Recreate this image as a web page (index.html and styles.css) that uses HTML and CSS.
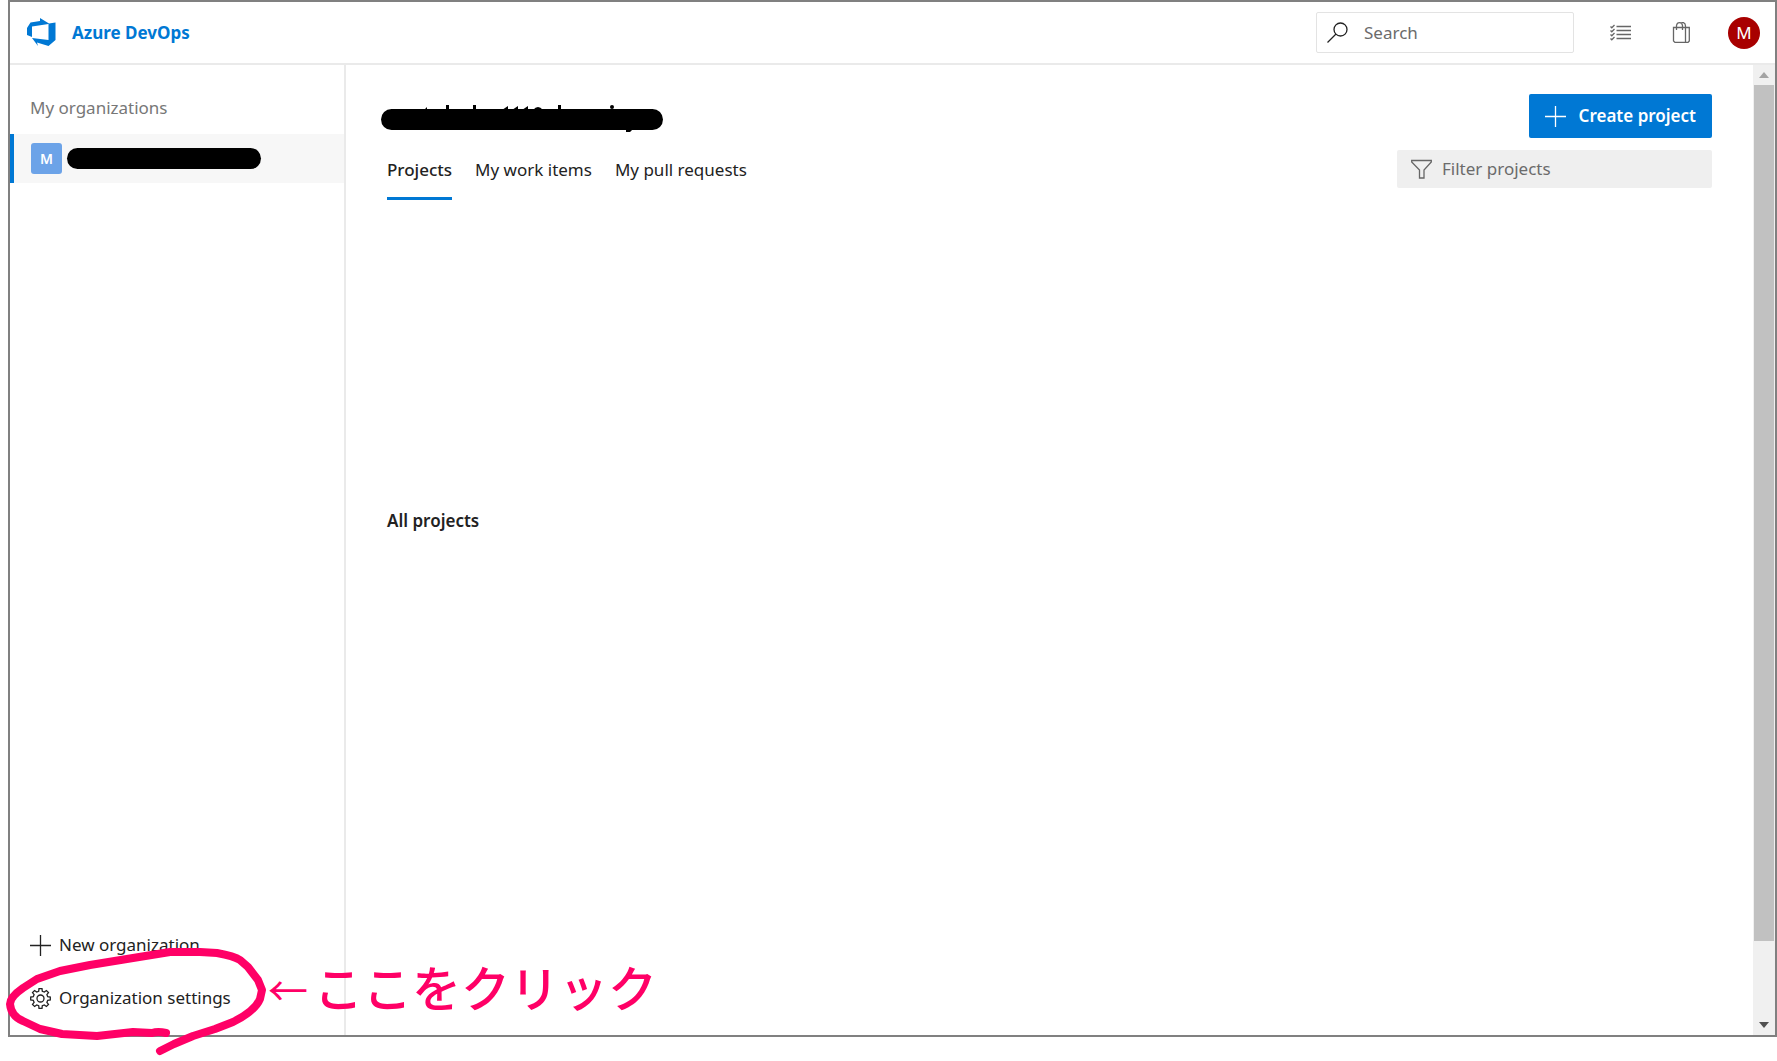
FILE: index.html
```html
<!DOCTYPE html>
<html lang="en">
<head>
    <meta charset="UTF-8">
    <meta name="viewport" content="width=device-width, initial-scale=1.0">
    <title>Azure DevOps</title>
    <link rel="stylesheet" href="styles.css">
</head>
<body>
    <div class="window">
        <header class="topbar">
            <a class="brand" href="#">
                <svg class="logo" viewBox="0 0 29 29" aria-hidden="true">
                    <path fill="#0078d4" d="M0 10 3.500 4.500 13 3V0L22 5.500 28.500 4.500V22L21.500 28 10 24.500 11 28 5 20 21.500 22V6L5 8.500V19L0 17Z"/>
                </svg>
                <span>Azure DevOps</span>
            </a>
            <label class="search">
                <svg class="icon" viewBox="0 0 21 21" aria-hidden="true">
                    <circle cx="13.500" cy="7.500" r="6.500"/>
                    <path d="M9 12 .5 20.500"/>
                </svg>
                <input type="search" placeholder="Search" aria-label="Search">
            </label>
            <div class="top-actions">
                <button class="icon-btn" aria-label="Work items">
                    <svg class="icon" viewBox="0 0 21 21">
                        <path d="M6.500 4.500H21M6.500 8.500H21M6.500 12.500H21M6.500 16.500H21"/>
                        <path d="M.5 4.500l1.300 1.300L4.500 3M.5 8.500l1.300 1.300L4.500 7M.5 12.500l1.300 1.300L4.500 11M.5 16.500l1.300 1.300L4.500 15"/>
                    </svg>
                </button>
                <button class="icon-btn" aria-label="Marketplace">
                    <svg class="icon" viewBox="0 0 21 21">
                        <path d="M4.500 5.500H20.300V19L19 20.400H6L4.500 19ZM16.500 5.500V20.400M7.500 8V3.500Q8 .7 10.500 .7T13.500 3.500V8M11.500 1Q13 .5 14.500 .7 16.500 1.500 16.500 4V8"/>
                    </svg>
                </button>
                <button class="user" aria-label="Account">M</button>
            </div>
        </header>

        <div class="content">
            <nav class="sidebar">
                <h2 class="sidebar-title">My organizations</h2>
                <a class="org" href="#" aria-label="Organization">
                    <span class="org-badge">M</span>
                    <span class="org-name"></span>
                </a>
                <div class="sidebar-footer">
                    <a class="side-link" href="#">
                        <svg class="icon" viewBox="0 0 21 21" aria-hidden="true"><path d="M0 10.500H21M10.500 0V21"/></svg>
                        <span>New organization</span>
                    </a>
                    <a class="side-link" href="#">
                        <svg class="icon" viewBox="0 0 21 21" aria-hidden="true">
                            <circle cx="10.500" cy="10.500" r="3.500"/>
                            <path d="M8.700 3.300 9 .7H12L12.300 3.300 14.300 4.100 16.400 2.500 18.500 4.600 16.900 6.700 17.700 8.700 20.300 9V12L17.700 12.300 16.900 14.300 18.500 16.400 16.400 18.500 14.300 16.900 12.300 17.700 12 20.300H9L8.700 17.700 6.700 16.900 4.600 18.500 2.500 16.400 4.100 14.300 3.300 12.300 .7 12V9L3.300 8.700 4.100 6.700 2.500 4.600 4.600 2.500 6.700 4.100Z"/>
                        </svg>
                        <span>Organization settings</span>
                    </a>
                </div>
            </nav>

            <main class="main">
                <div class="main-row">
                    <svg class="redacted" viewBox="0 0 282 30" aria-hidden="true">
                        <rect x="0" y="5" width="282" height="21" rx="10.500"/>
                        <path d="M43 6l3-3v3zM65 1h3v6h-3zM92 1h3v6h-3zM121 6l6-4v4zM131 6l6-4v4zM141 6l6-4v4zM152 6q5-6 10 0zM177 1h3v6h-3zM245 25h7l-3 3h-4z"/>
                        <circle cx="231" cy="3" r="2"/>
                    </svg>
                    <button class="create-btn">
                        <svg class="icon" viewBox="0 0 21 21" aria-hidden="true"><path d="M0 10.500H21M10.500 0V21"/></svg>
                        <span>Create project</span>
                    </button>
                </div>
                <div class="main-row">
                    <div class="tabs">
                        <a class="tab active" href="#">Projects</a>
                        <a class="tab" href="#">My work items</a>
                        <a class="tab" href="#">My pull requests</a>
                    </div>
                    <label class="filter">
                        <svg class="icon" viewBox="0 0 21 21" aria-hidden="true">
                            <path d="M.7 1.500H20.300V3L13 11V19H8.500V11L.7 3Z"/>
                        </svg>
                        <input type="text" placeholder="Filter projects" aria-label="Filter projects">
                    </label>
                </div>
                <h2 class="section-title">All projects</h2>
            </main>

            <div class="scrollbar" aria-hidden="true">
                <span class="arrow arrow-up"></span>
                <div class="track"><div class="thumb"></div></div>
                <span class="arrow arrow-down"></span>
            </div>
        </div>
    </div>

    <!-- Hand-drawn note over the settings link -->
    <div class="note">
        <svg class="note-circle" viewBox="0 0 270 120" aria-hidden="true">
            <path d="M166 92Q158 90 152 92L133 91 97 95 62 93 40 88 23 80Q11 75 10 63 10 56 23 47L37 38 60 30 90 24 133 17 170 11 200 11 217 12Q234 15 240 19L248 26 258 39 262 49 260 58Q255 70 233 81L215 88 193 95 174 103 160 110"/>
        </svg>
        <span class="note-text" lang="ja"><span class="note-arrow">←</span>ここをクリック</span>
    </div>
</body>
</html>
```
FILE: styles.css
```css
* {
    box-sizing: border-box;
}
body {
    position: relative;
    display: flex;
    min-height: 100vh;
    margin: 0;
    padding: 0 0 24px 8px;
    background-color: #fff;
    color: #222;
    font-family: "Noto Sans", "Open Sans", sans-serif;
    font-size: 17px;
    line-height: 24px;
}
a {
    color: inherit;
    text-decoration: none;
}
h2 {
    margin: 0;
    font-size: 17px;
}
button, input {
    padding: 0;
    border: none;
    background: none;
    font: inherit;
}
button {
    cursor: pointer;
}
input {
    flex: 1;
    min-width: 0;
    outline: none;
}
input::placeholder {
    color: #6b6b6b;
    opacity: 1;
}
.icon {
    flex: none;
    width: 21px;
    height: 21px;
    fill: none;
    stroke: currentColor;
    stroke-width: 1.3;
}
.window {
    display: flex;
    flex: 1;
    flex-direction: column;
    border: 2px solid #808080;
}

/* Top bar */
.topbar {
    display: flex;
    align-items: center;
    height: 63px;
    padding: 0 15px 0 17px;
    border-bottom: 2px solid #eaeaea;
}
.brand {
    display: flex;
    align-items: center;
    gap: 16px;
    margin-right: auto;
    color: #0078d4;
    font-weight: 700;
}
.logo {
    width: 29px;
    height: 29px;
}
.search {
    display: flex;
    align-items: center;
    gap: 16px;
    width: 258px;
    height: 41px;
    padding: 0 10px;
    border: 1px solid #e3e3e3;
    border-radius: 2px;
}
.top-actions {
    display: flex;
    align-items: center;
    gap: 38px;
    margin-left: 36px;
}
.icon-btn {
    display: flex;
    color: #666;
}
.user {
    width: 32px;
    height: 32px;
    border-radius: 50%;
    background-color: #a80000;
    color: #fff;
}

/* Sidebar */
.content {
    display: flex;
    flex: 1;
}
.sidebar {
    display: flex;
    flex: none;
    flex-direction: column;
    width: 336px;
    padding-top: 31px;
    border-right: 2px solid #eaeaea;
}
.sidebar-title {
    margin-bottom: 14px;
    padding-left: 20px;
    color: #777;
    font-weight: 400;
}
.org {
    display: flex;
    align-items: center;
    gap: 5px;
    height: 49px;
    padding-left: 17px;
    border-left: 4px solid #0078d4;
    background-color: #f7f7f7;
}
.org-badge {
    width: 31px;
    border-radius: 3px;
    background-color: #6ca3e8;
    color: #fff;
    font-size: 14px;
    font-weight: 600;
    line-height: 31px;
    text-align: center;
}
.org-name {
    width: 194px;
    height: 21px;
    border-radius: 11px;
    background-color: #000;
}
.sidebar-footer {
    display: grid;
    gap: 29px;
    margin-top: auto;
    padding: 0 20px 25px;
}
.side-link {
    display: flex;
    align-items: center;
    gap: 8px;
}

/* Main area */
.main {
    flex: 1;
    padding: 29px 41px;
}
.main-row {
    display: flex;
    justify-content: space-between;
    margin-bottom: 12px;
}
.redacted {
    width: 282px;
    height: 30px;
    margin: 10px 0 0 -6px;
}
.create-btn {
    display: flex;
    align-items: center;
    gap: 13px;
    height: 44px;
    padding: 0 16px;
    border-radius: 2px;
    background-color: #0078d4;
    color: #fff;
    font-weight: 600;
}
.tabs {
    display: flex;
    gap: 23px;
    height: 50px;
}
.tab {
    padding-top: 8px;
}
.tab.active {
    border-bottom: 3px solid #0078d4;
    font-weight: 500;
}
.filter {
    display: flex;
    align-items: center;
    gap: 10px;
    width: 315px;
    height: 38px;
    padding: 0 14px;
    border-radius: 2px;
    background-color: #efefef;
    color: #666;
}
.section-title {
    margin-top: 309px;
    font-weight: 600;
}

/* Scrollbar */
.scrollbar {
    display: flex;
    flex-direction: column;
    width: 22px;
    background-color: #f0f0f0;
}
.track {
    flex: 1;
    padding: 0 1px;
}
.thumb {
    height: 92%;
    background-color: #c1c1c1;
}
.arrow {
    height: 20px;
    padding: 7px 6px;
}
.arrow::before {
    content: "";
    display: block;
    height: 6px;
    background-color: #a3a3a3;
    clip-path: polygon(50% 0, 100% 100%, 0 100%);
}
.arrow-down::before {
    background-color: #505050;
    clip-path: polygon(0 0, 100% 0, 50% 100%);
}

/* Note */
.note {
    position: absolute;
    bottom: 0;
    left: 0;
    display: flex;
    color: #ff0066;
    pointer-events: none;
}
.note-circle {
    width: 270px;
    height: 120px;
    fill: none;
    stroke: currentColor;
    stroke-width: 8;
    stroke-linecap: round;
    stroke-linejoin: round;
}
.note-text {
    display: flex;
    gap: 6px;
    margin-left: -2px;
    font-family: "Noto Sans CJK JP", sans-serif;
    font-size: 49px;
    font-weight: 500;
    line-height: 90px;
}
.note-arrow {
    font-size: 40px;
    font-weight: 400;
    line-height: 96px;
}
```
